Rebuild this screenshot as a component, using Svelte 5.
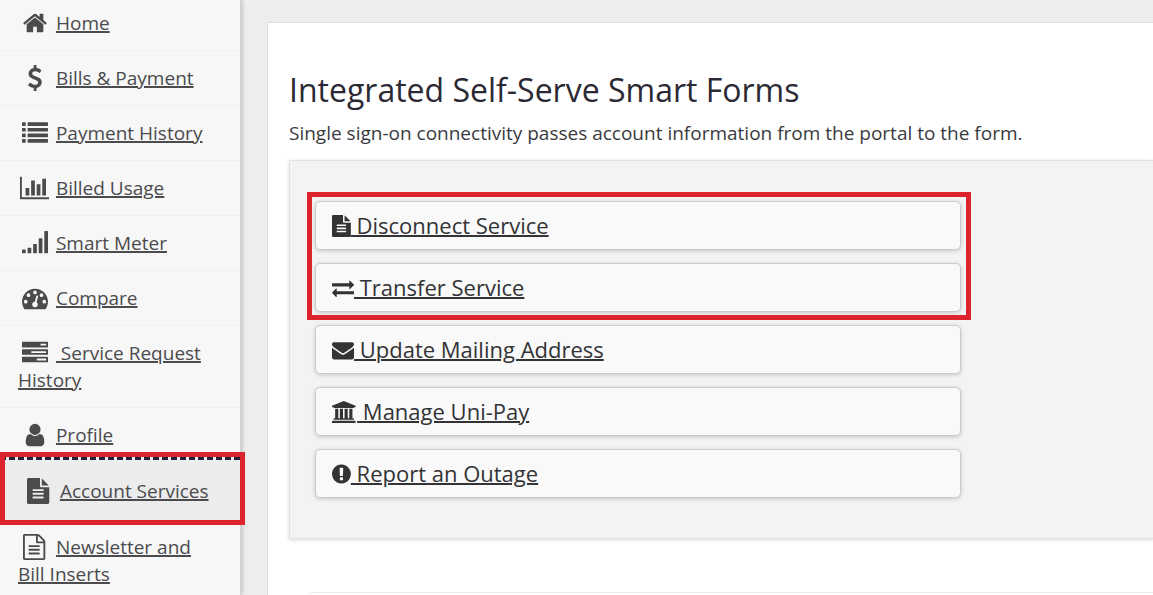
<script>
  const lines = (y) =>
    `M1280 ${y + 64}v-64q0-14-9-23t-23-9h-704q-14 0-23 9t-9 23v64q0 14 9 23t23 9h704q14 0 23-9t9-23z`;
  const dot = (x, y) => `M${x + 128} ${y}a128 128 0 1 0-256 0a128 128 0 1 0 256 0z`;
  const block = (x, y, w, h) =>
    `M${x + 32} ${y}h${w - 64}q32 0 32 32v${h - 64}q0 32-32 32h-${w - 64}q-32 0-32-32v-${h - 64}q0-32 32-32z`;

  const icons = {
    home: { w: 1792, d: 'M1472 992v480q0 26-19 45t-45 19h-384v-384h-256v384h-384q-26 0-45-19t-19-45v-480q0-1 .5-3t.5-3l575-474 575 474q1 2 1 6zm223-69l-62 74q-8 9-21 11h-3q-13 0-21-7l-692-577-692 577q-12 8-24 7-13-2-21-11l-62-74q-8-10-7-23.5t11-21.5l719-599q32-26 76-26t76 26l244 204v-195q0-14 9-23t23-9h192q14 0 23 9t9 23v408l219 182q10 8 11 21.5t-7 23.5z' },
    dollar: { w: 1792, d: 'M1362 1185q0 153-99.5 263.5t-258.5 136.5v175q0 14-9 23t-23 9h-135q-13 0-22.5-9.5t-9.5-22.5v-175q-66-9-127.5-31t-101.5-44.5-74-48-46.5-37.5-17.5-18q-17-21-2-41l103-135q7-10 23-12 15-2 24 9l2 2q113 99 243 125 37 8 74 8 81 0 142.5-43t61.5-122q0-28-15-53t-33.5-42-58.5-37.5-66-32-80-32.5q-39-16-61.5-25t-61.5-26.5-62.5-31-56.5-35.5-53.5-42.5-43.5-49-35.5-58-21-66.5-8.5-78q0-138 98-242t255-134v-180q0-13 9.5-22.5t22.5-9.5h135q14 0 23 9t9 23v176q57 6 110.5 23t87 33.5 63.5 37.5 39 29 15 14q17 18 5 38l-81 146q-8 15-23 16-14 3-27-7-3-3-14.5-12t-39-26.5-58.5-32-74.5-26-85.5-11.5q-95 0-155 43t-60 111q0 26 8.5 48t29.5 41.5 39.5 33 56 31 60.5 27 70 27.5q53 20 81 31.5t76 35 75.5 42.5 62 50 53 63.5 31.5 76.5 13 94z' },
    list: { w: 1792, d: [128, 512, 896, 1280].map((y) => block(0, y + 32, 256, 256) + block(384, y + 32, 1408, 256)).join('') },
    chart: { w: 2048, d: 'M640 896v512h-256v-512h256zm384-512v1024h-256v-1024h256zm1024 1152v128h-2048v-1536h128v1408h1920zm-640-896v768h-256v-768h256zm384-384v1152h-256v-1152h256z' },
    signal: { w: 1792, d: block(0, 1344, 256, 256) + block(384, 1216, 256, 384) + block(768, 960, 256, 640) + block(1152, 576, 256, 1024) + block(1536, 64, 256, 1536) },
    gauge: { w: 1792, d: dot(256, 1152) + dot(448, 704) + dot(1536, 1152) + dot(896, 512) + dot(1344, 704) + 'M1004 1185l101-382q6-26-7.5-48.5t-38.5-29.5-48 6.5-30 39.5l-101 382q-60 5-107 43.5t-63 98.5q-20 77 20 146t117 89 146-20 89-117q16-60-6-117t-72-91zM1792 1152q0 261-141 483-19 29-54 29h-1402q-35 0-54-29-141-221-141-483 0-182 71-348t191-286 286-191 348-71 348 71 286 191 191 286 71 348z' },
    tasks: { w: 1792, d: 'M1024 1408h640v-128h-640v128zm-384-512h1024v-128h-1024v128zm640-512h384v-128h-384v128z' + [128, 640, 1152].map((y) => block(0, y, 1792, 384)).join('') },
    user: { w: 1792, d: 'M1536 1399q0 109-62.5 187t-150.5 78h-854q-88 0-150.5-78t-62.5-187q0-85 8.5-160.5t31.5-152 58.5-131 94-89 134.5-34.5q131 128 313 128t313-128q76 0 134.5 34.5t94 89 58.5 131 31.5 152 8.5 160.5zm-256-887q0 159-112.5 271.5t-271.5 112.5-271.5-112.5-112.5-271.5 112.5-271.5 271.5-112.5 271.5 112.5 112.5 271.5z' },
    file: { w: 1536, x: 128, d: 'M1596 476q14 14 28 36h-472v-472q22 14 36 28zm-476 164h544v1056q0 40-28 68t-68 28h-1344q-40 0-68-28t-28-68v-1600q0-40 28-68t68-28h800v544q0 40 28 68t68 28z' + lines(1312) + lines(1056) + lines(800) },
    fileOutline: { w: 1536, x: 128, d: 'M1596 380q28 28 48 76t20 88v1152q0 40-28 68t-68 28h-1344q-40 0-68-28t-28-68v-1600q0-40 28-68t68-28h896q40 0 88 20t76 48zm-444-244v376h376q-10-29-22-41l-313-313q-12-12-41-22zm384 1528v-1024h-416q-40 0-68-28t-28-68v-416h-768v1536h1280z' + lines(1312) + lines(1056) + lines(800) },
    exchange: { w: 1792, d: 'M1792 1184v192q0 13-9.5 22.5t-22.5 9.5h-1376v192q0 13-9.5 22.5t-22.5 9.5q-12 0-24-10l-319-320q-9-9-9-22 0-14 9-23l320-320q9-9 23-9 13 0 22.5 9.5t9.5 22.5v192h1376q13 0 22.5 9.5t9.5 22.5zm0-544q0 14-9 23l-320 320q-9 9-23 9-13 0-22.5-9.5t-9.5-22.5v-192h-1376q-13 0-22.5-9.5t-9.5-22.5v-192q0-13 9.5-22.5t22.5-9.5h1376v-192q0-14 9-23t23-9q12 0 24 10l319 319q9 9 9 23z' },
    envelope: { w: 1792, d: 'M1792 710v794q0 66-47 113t-113 47h-1472q-66 0-113-47t-47-113v-794q44 49 101 87 362 246 497 345 57 42 92.5 65.5t94.5 48 110 24.5h2q51 0 110-24.5t94.5-48 92.5-65.5q170-123 498-345 57-39 100-87zm0-294q0 79-49 151t-122 123q-376 261-468 325-10 7-42.5 31t-54 38.5-52 32.5-57.5 27-50 9h-2q-23 0-50-9t-57.5-27-52-32.5-54-38.5-42.5-31q-91-64-262-182.5t-205-142.5q-62-42-117-115.5t-55-136.5q0-78 41.5-130t118.5-52h1472q65 0 112.5 47t47.5 113z' },
    bank: { w: 2048, d: 'M960 0l960 384v128h-128q0 26-20.5 45t-48.5 19h-1526q-28 0-48.5-19t-20.5-45h-128v-128zm-704 640h256v768h128v-768h256v768h128v-768h256v768h128v-768h256v768h59q28 0 48.5 19t20.5 45v64h-1664v-64q0-26 20.5-45t48.5-19h59v-768zm1595 960q28 0 48.5 19t20.5 45v128h-1920v-128q0-26 20.5-45t48.5-19h1782z' },
    alert: { w: 1536, x: 128, d: 'M896 128q209 0 385.5 103t279.5 279.5 103 385.5-103 385.5-279.5 279.5-385.5 103-385.5-103-279.5-279.5-103-385.5 103-385.5 279.5-279.5 385.5-103zm128 1247v-190q0-14-9-23.5t-22-9.5h-192q-13 0-23 10t-10 23v190q0 13 10 23t23 10h192q13 0 22-9.5t9-23.5zm-2-344l18-621q0-12-10-18-10-8-24-8h-220q-14 0-24 8-10 6-10 18l17 621q0 10 10 17.5t24 7.5h185q14 0 23.5-7.5t10.5-17.5z' },
  };

  const menu = [
    { icon: 'home', label: 'Home' },
    { icon: 'dollar', label: 'Bills & Payment' },
    { icon: 'list', label: 'Payment History' },
    { icon: 'chart', label: 'Billed Usage' },
    { icon: 'signal', label: 'Smart Meter' },
    { icon: 'gauge', label: 'Compare' },
    { icon: 'tasks', label: '\u00a0Service Request History' },
    { icon: 'user', label: 'Profile' },
    { icon: 'file', label: 'Account Services', active: true },
    { icon: 'fileOutline', label: 'Newsletter and Bill Inserts' },
  ];

  const highlighted = [
    { icon: 'file', label: 'Disconnect Service' },
    { icon: 'exchange', label: 'Transfer Service' },
  ];
  const others = [
    { icon: 'envelope', label: 'Update Mailing Address' },
    { icon: 'bank', label: 'Manage Uni-Pay' },
    { icon: 'alert', label: 'Report an Outage' },
  ];
</script>

{#snippet glyph(name)}
  <svg viewBox="{icons[name].x ?? 0} 0 {icons[name].w} 1792" aria-hidden="true">
    <path fill-rule="evenodd" d={icons[name].d} />
  </svg>
{/snippet}

{#snippet form(item)}
  <li><a href="#form">{@render glyph(item.icon)}<span>&nbsp;{item.label}</span></a></li>
{/snippet}

<div class="shell">
  <nav>
    <ul>
      {#each menu as item}
        <li class:active={item.active}>
          <a href="#menu"><span class="icon">{@render glyph(item.icon)}</span> <span class="label">{item.label}</span></a>
        </li>
      {/each}
    </ul>
  </nav>

  <main>
    <article>
      <h1>Integrated Self-Serve Smart Forms</h1>
      <p>Single sign-on connectivity passes account information from the portal to the form.</p>
      <section class="panel">
        <ul class="forms marked">
          {#each highlighted as item}{@render form(item)}{/each}
        </ul>
        <ul class="forms">
          {#each others as item}{@render form(item)}{/each}
        </ul>
      </section>
      <hr />
    </article>
  </main>
</div>

<style>
  :global(body) {
    overflow: hidden;
    background: #ededed;
    font-family: 'Open Sans', sans-serif;
  }
  ul {
    list-style: none;
    margin: 0;
    padding: 0;
  }
  svg {
    fill: currentColor;
  }
  .shell {
    display: flex;
    height: 100vh;
    overflow: hidden;
  }
  nav {
    box-sizing: border-box;
    flex: 0 0 241px;
    background: #f7f7f7;
    border-right: 1px solid #d4d4d4;
    box-shadow: 1px 0 4px rgba(0, 0, 0, 0.22);
  }
  nav li {
    padding: 14px 18px 13px;
    border-bottom: 1px solid #f1f1f1;
    font-size: 19px;
    line-height: 27px;
  }
  nav li:first-child {
    padding-top: 10px;
  }
  nav a {
    color: #4b4b4d;
    text-decoration: none;
  }
  .label {
    text-decoration: underline;
    text-decoration-thickness: 2px;
  }
  .icon {
    display: inline-flex;
    justify-content: center;
    width: 33px;
    height: 26px;
    margin: -4px 0;
    vertical-align: -6px;
  }
  .icon svg {
    height: 26px;
    flex: none;
  }
  nav li.active {
    position: relative;
    margin-top: -6px;
    padding: 18px 14px 15px 22px;
    border-top: 3px dashed #23203a;
    border-bottom: 0;
    background: #ececec;
  }
  nav li.active::after {
    content: '';
    position: absolute;
    inset: -8px -5px -5px 0;
    border: 5px solid #db242e;
  }
  main {
    flex: 1;
    min-width: 0;
    padding: 22px 0 0 26px;
  }
  article {
    height: 100%;
    padding: 44px 0 0 21px;
    background: #fff;
    border: 1px solid #dfdfdf;
    border-right: 0;
  }
  h1 {
    margin: 0;
    color: #2b2933;
    font-size: 32px;
    font-weight: 400;
    line-height: 46px;
  }
  p {
    margin: 7px 0 13px;
    color: #3a3a3e;
    font-size: 19px;
    line-height: 27px;
  }
  .panel {
    padding: 40px 25px;
    background: #f3f3f3;
    border: 1px solid #e2e2e2;
    border-right: 0;
    box-shadow: 0 1px 4px rgba(0, 0, 0, 0.15);
  }
  .forms {
    position: relative;
    display: grid;
    gap: 13px;
    max-width: 646px;
  }
  .forms + .forms {
    margin-top: 13px;
  }
  .marked::after {
    content: '';
    position: absolute;
    inset: -9px -10px -8px -8px;
    border: 5px solid #db242e;
    pointer-events: none;
  }
  .forms a {
    display: block;
    padding: 8px 16px;
    background: #f9f9f9;
    border: 1px solid #cbcbcb;
    border-radius: 5px;
    box-shadow: 0 1px 4px rgba(0, 0, 0, 0.18);
    color: #333336;
    font-size: 22px;
    line-height: 31px;
    text-decoration: none;
  }
  .forms a span {
    text-decoration: underline;
    text-decoration-thickness: 2px;
  }
  .forms svg {
    height: 22px;
    vertical-align: -3px;
  }
  hr {
    margin: 53px 0 0 21px;
    border: 0;
    border-top: 1px solid #ededed;
  }
</style>
